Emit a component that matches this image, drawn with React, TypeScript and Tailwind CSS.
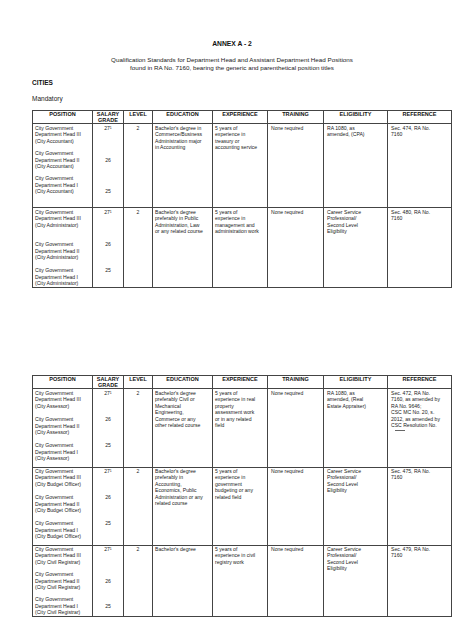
import React from 'react';

type RowData = {
  h: string;
  pt: string;
  pos: string[][];
  gaps: string[];
  sal: string[][];
  edu: string[];
  exp: string[];
  elig: string[];
  ref: string[];
};

const headers: string[][] = [
  ['POSITION'],
  ['SALARY', 'GRADE'],
  ['LEVEL'],
  ['EDUCATION'],
  ['EXPERIENCE'],
  ['TRAINING'],
  ['ELIGIBILITY'],
  ['REFERENCE'],
];

function grp(title: string): string[][] {
  return [
    ['City Government', 'Department Head III', title],
    ['City Government', 'Department Head II', title],
    ['City Government', 'Department Head I', title],
  ];
}

const careerService = ['Career Service', 'Professional/', 'Second Level', 'Eligibility'];

const table1: RowData[] = [
  {
    h: 'h-[84px]',
    pt: 'pt-[1px]',
    pos: grp('(City Accountant)'),
    gaps: ['mt-[6px]', 'mt-[6px]'],
    sal: [['27*', '', ''], ['', '26', ''], ['', '', '25']],
    edu: ["Bachelor's degree in", 'Commerce/Business', 'Administration major', 'in Accounting'],
    exp: ['5 years of', 'experience in', 'treasury or', 'accounting service'],
    elig: ['RA 1080, as', 'amended, (CPA)'],
    ref: ['Sec. 474, RA No.', '7160'],
  },
  {
    h: 'h-[80px]',
    pt: 'pt-[1px]',
    pos: grp('(City Administrator)'),
    gaps: ['mt-[13px]', 'mt-[7px]'],
    sal: [['27*', '', ''], ['26', '', ''], ['25', '', '']],
    edu: ["Bachelor's degree", 'preferably in Public', 'Administration, Law', 'or any related course'],
    exp: ['5 years of', 'experience in', 'management and', 'administration work'],
    elig: careerService,
    ref: ['Sec. 480, RA No.', '7160'],
  },
];

const table2: RowData[] = [
  {
    h: 'h-[79px]',
    pt: 'pt-[1px]',
    pos: grp('(City Assessor)'),
    gaps: ['mt-[7px]', 'mt-[7px]'],
    sal: [['27*', '', ''], ['26', '', ''], ['25', '', '']],
    edu: ["Bachelor's degree", 'preferably Civil or', 'Mechanical', 'Engineering,', 'Commerce or any', 'other related course'],
    exp: ['5 years of', 'experience in real', 'property', 'assessment work', 'or in any related', 'field'],
    elig: ['RA 1080, as', 'amended, (Real', 'Estate Appraiser)'],
    ref: ['Sec. 472, RA No.', '7160, as amended by', 'RA No. 9646;', 'CSC MC No. 20, s.', '2012, as amended by', 'CSC Resolution No.', '__LINE__'],
  },
  {
    h: 'h-[78px]',
    pt: 'pt-[0px]',
    pos: grp('(City Budget Officer)'),
    gaps: ['mt-[7px]', 'mt-[7px]'],
    sal: [['27*', '', ''], ['26', '', ''], ['25', '', '']],
    edu: ["Bachelor's degree", 'preferably in', 'Accounting,', 'Economics, Public', 'Administration or any', 'related course'],
    exp: ['5 years of', 'experience in', 'government', 'budgeting or any', 'related field'],
    elig: careerService,
    ref: ['Sec. 475, RA No.', '7160'],
  },
  {
    h: 'h-[71px]',
    pt: 'pt-[0px]',
    pos: grp('(City Civil Registrar)'),
    gaps: ['mt-[6px]', 'mt-[6px]'],
    sal: [['27*', '', ''], ['', '26', ''], ['', '25', '']],
    edu: ["Bachelor's degree"],
    exp: ['5 years of', 'experience in civil', 'registry work'],
    elig: careerService,
    ref: ['Sec. 479, RA No.', '7160'],
  },
];

function Line({ t }: { t: string }) {
  if (t === '__LINE__') {
    return (
      <div className="h-[6.4px] pt-[2px]">
        <div className="ml-[4px] w-[10px] border-b border-[#666]" />
      </div>
    );
  }
  if (t === '27*') {
    return (
      <div className="h-[6.4px] whitespace-nowrap">
        27<span className="relative top-[-1.5px] text-[3.5px]">1</span>
      </div>
    );
  }
  return <div className="h-[6.4px] whitespace-nowrap">{t === '' ? '\u00a0' : t}</div>;
}

const cell = 'border-r border-b border-[#444] px-[2px] text-[5.1px] leading-[6.4px] text-[#222]';

function Groups({ groups, gaps }: { groups: string[][]; gaps: string[] }) {
  return (
    <>
      {groups.map((g, i) => (
        <div key={i} className={i === 0 ? '' : gaps[i - 1]}>
          {g.map((t, j) => (
            <Line key={j} t={t} />
          ))}
        </div>
      ))}
    </>
  );
}

function Lines({ lines }: { lines: string[] }) {
  return (
    <>
      {lines.map((t, i) => (
        <Line key={i} t={t} />
      ))}
    </>
  );
}

function Row({ r }: { r: RowData }) {
  return (
    <>
      <div className={`${cell} ${r.h} ${r.pt}`}>
        <Groups groups={r.pos} gaps={r.gaps} />
      </div>
      <div className={`${cell} ${r.h} ${r.pt} text-center`}>
        <Groups groups={r.sal} gaps={r.gaps} />
      </div>
      <div className={`${cell} ${r.h} ${r.pt} text-center`}>
        <Line t="2" />
      </div>
      <div className={`${cell} ${r.h} ${r.pt}`}>
        <Lines lines={r.edu} />
      </div>
      <div className={`${cell} ${r.h} ${r.pt}`}>
        <Lines lines={r.exp} />
      </div>
      <div className={`${cell} ${r.h} ${r.pt} pl-[3px]`}>
        <Line t="None required" />
      </div>
      <div className={`${cell} ${r.h} ${r.pt} pl-[3px]`}>
        <Lines lines={r.elig} />
      </div>
      <div className={`${cell} ${r.h} ${r.pt} pl-[3px]`}>
        <Lines lines={r.ref} />
      </div>
    </>
  );
}

function Table({ rows, mt }: { rows: RowData[]; mt: string }) {
  return (
    <div
      className={`ml-[32px] grid w-[420px] grid-cols-[60px_31px_29px_60px_55px_56px_64px_64px] border-t border-l border-[#444] ${mt}`}
    >
      {headers.map((h, i) => (
        <div
          key={i}
          className="h-[13px] border-r border-b border-[#444] text-center text-[5.5px] font-bold leading-[6px] text-[#111]"
        >
          {h.map((t, j) => (
            <div key={j} className="whitespace-nowrap">
              {t}
            </div>
          ))}
        </div>
      ))}
      {rows.map((r, i) => (
        <Row key={i} r={r} />
      ))}
    </div>
  );
}

export default function App() {
  return (
    <div
      className="min-h-[632px] w-[474px] bg-white pt-[40px] text-[#111]"
      style={{ fontFamily: '"Liberation Sans", Arial, sans-serif' }}
    >
      <div className="ml-[32px] w-[400px] text-center text-[6.75px] font-bold leading-[8px]">ANNEX A - 2</div>
      <div className="ml-[32px] mt-[8px] w-[400px] text-center text-[6.25px] leading-[8px] text-[#222]">
        <div className="whitespace-nowrap">
          Qualification Standards for Department Head and Assistant Department Head Positions
        </div>
        <div className="whitespace-nowrap">
          found in RA No. 7160, bearing the generic and parenthetical position titles
        </div>
      </div>
      <div className="ml-[32px] mt-[7px] text-[6.5px] font-bold leading-[8px]">CITIES</div>
      <div className="ml-[32px] mt-[8px] text-[6.5px] leading-[8px] text-[#222]">Mandatory</div>
      <Table rows={table1} mt="mt-[7px]" />
      <Table rows={table2} mt="mt-[87px]" />
    </div>
  );
}
